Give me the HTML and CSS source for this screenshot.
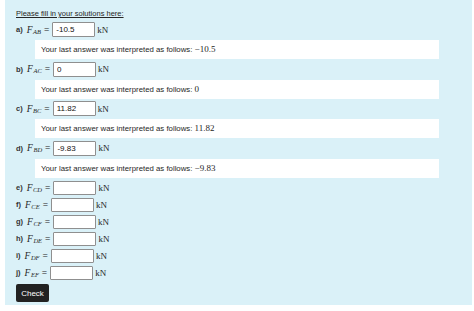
FILE: index.html
```html
<!DOCTYPE html>
<html lang="en">

<head>
    <meta charset="UTF-8">
    <meta name="viewport" content="width=device-width, initial-scale=1.0">
    <title>Answers</title>
    <link rel="stylesheet" href="styles.css">
</head>

<body>
    <div class="panel">
        <p class="intro">Please fill in your solutions here:</p>

        <div class="row">
            <span class="lbl">a)</span><span class="m"><i>F</i><sub>AB</sub><span class="eq">=</span></span>
            <input class="ans" type="text" value="-10.5">
            <span class="unit">kN</span>
        </div>
        <div class="fb">Your last answer was interpreted as follows: <span class="m">−10.5</span></div>

        <div class="row">
            <span class="lbl">b)</span><span class="m"><i>F</i><sub>AC</sub><span class="eq">=</span></span>
            <input class="ans" type="text" value="0">
            <span class="unit">kN</span>
        </div>
        <div class="fb">Your last answer was interpreted as follows: <span class="m">0</span></div>

        <div class="row">
            <span class="lbl">c)</span><span class="m"><i>F</i><sub>BC</sub><span class="eq">=</span></span>
            <input class="ans" type="text" value="11.82">
            <span class="unit">kN</span>
        </div>
        <div class="fb">Your last answer was interpreted as follows: <span class="m">11.82</span></div>

        <div class="row">
            <span class="lbl">d)</span><span class="m"><i>F</i><sub>BD</sub><span class="eq">=</span></span>
            <input class="ans" type="text" value="-9.83">
            <span class="unit">kN</span>
        </div>
        <div class="fb">Your last answer was interpreted as follows: <span class="m">−9.83</span></div>

        <div class="row short">
            <span class="lbl">e)</span><span class="m"><i>F</i><sub>CD</sub><span class="eq">=</span></span>
            <input class="ans" type="text">
            <span class="unit">kN</span>
        </div>
        <div class="row short">
            <span class="lbl">f)</span><span class="m"><i>F</i><sub>CE</sub><span class="eq">=</span></span>
            <input class="ans" type="text">
            <span class="unit">kN</span>
        </div>
        <div class="row short">
            <span class="lbl">g)</span><span class="m"><i>F</i><sub>CF</sub><span class="eq">=</span></span>
            <input class="ans" type="text">
            <span class="unit">kN</span>
        </div>
        <div class="row short">
            <span class="lbl">h)</span><span class="m"><i>F</i><sub>DE</sub><span class="eq">=</span></span>
            <input class="ans" type="text">
            <span class="unit">kN</span>
        </div>
        <div class="row short">
            <span class="lbl">i)</span><span class="m"><i>F</i><sub>DF</sub><span class="eq">=</span></span>
            <input class="ans" type="text">
            <span class="unit">kN</span>
        </div>
        <div class="row short">
            <span class="lbl">j)</span><span class="m"><i>F</i><sub>EF</sub><span class="eq">=</span></span>
            <input class="ans" type="text">
            <span class="unit">kN</span>
        </div>

        <button class="check">Check</button>
    </div>
</body>

</html>
```

FILE: styles.css
```css
* {
    margin: 0;
    padding: 0;
    box-sizing: border-box;
}

body {
    background: #fff;
    font-family: "Liberation Sans", Arial, sans-serif;
    font-size: 7.5px;
    color: #262626;
}

.panel {
    margin-left: 5px;
    width: 467px;
    height: 305px;
    background: #daf1f8;
    padding: 7px 11px 0;
    display: flex;
    flex-direction: column;
    align-items: flex-start;
}

.intro {
    text-decoration: underline;
    height: 13px;
    line-height: 13px;
    margin-bottom: 1px;
}

.m {
    font-family: "Liberation Serif", "Times New Roman", serif;
    font-size: 9.5px;
}

.m i {
    font-style: italic;
}

.m sub {
    font-style: italic;
    font-size: 6.5px;
    vertical-align: -1px;
    margin-left: 0.5px;
}

.eq {
    margin: 0 3px 0 3px;
}

.row {
    display: flex;
    align-items: center;
    height: 17px;
}

.lbl {
    font-weight: bold;
    color: #333;
    margin-right: 4px;
}

.ans {
    flex-shrink: 0;
    width: 43px;
    height: 15px;
    border: 1px solid #8f8f8f;
    border-radius: 1px;
    background: #fff;
    font-family: "Liberation Sans", Arial, sans-serif;
    font-size: 8px;
    color: #111;
    padding: 0 3px;
    outline: none;
}

.unit {
    font-family: "Liberation Serif", "Times New Roman", serif;
    font-size: 9px;
    margin-left: 2px;
}

.fb {
    align-self: stretch;
    margin: 2px 22px 1.5px 19px;
    height: 19px;
    line-height: 19px;
    background: #fff;
    padding-left: 6px;
    font-size: 7.8px;
}

.fb .m {
    font-size: 9px;
}

.short .ans {
    height: 14px;
}

.check {
    margin-top: 3px;
    width: 33px;
    height: 18px;
    background: #222;
    color: #fff;
    border: none;
    border-radius: 2px;
    font-family: "Liberation Sans", Arial, sans-serif;
    font-size: 8px;
}
```
